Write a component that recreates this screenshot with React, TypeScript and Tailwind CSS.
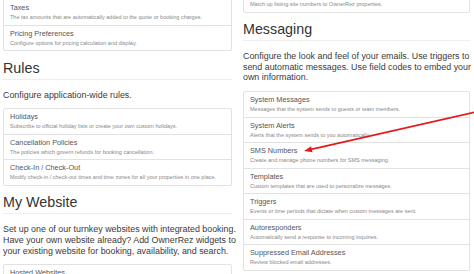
import React from 'react';

// --- Interfaces ---
interface Entry {
  title: string;
  desc: string;
}

interface SectionProps {
  title: string;
  lines: string[];
}

// --- Data ---
const pricingItems: Entry[] = [
  { title: 'Taxes', desc: 'The tax amounts that are automatically added to the quote or booking charges.' },
  { title: 'Pricing Preferences', desc: 'Configure options for pricing calculation and display.' },
];

const rulesItems: Entry[] = [
  { title: 'Holidays', desc: 'Subscribe to official holiday lists or create your own custom holidays.' },
  { title: 'Cancellation Policies', desc: 'The policies which govern refunds for booking cancellation.' },
  { title: 'Check-In / Check-Out', desc: 'Modify check-in / check-out times and time zones for all your properties in one place.' },
];

const websiteItems: Entry[] = [
  { title: 'Hosted Websites', desc: 'Build and manage your OwnerRez hosted websites.' },
];

const channelItems: Entry[] = [
  { title: 'Listing Site Numbers', desc: 'Match up listing site numbers to OwnerRez properties.' },
];

const messagingItems: Entry[] = [
  { title: 'System Messages', desc: 'Messages that the system sends to guests or team members.' },
  { title: 'System Alerts', desc: 'Alerts that the system sends to you automatically.' },
  { title: 'SMS Numbers', desc: 'Create and manage phone numbers for SMS messaging.' },
  { title: 'Templates', desc: 'Custom templates that are used to personalize messages.' },
  { title: 'Triggers', desc: 'Events or time periods that dictate when custom messages are sent.' },
  { title: 'Autoresponders', desc: 'Automatically send a response to incoming inquiries.' },
  { title: 'Suppressed Email Addresses', desc: 'Review blocked email addresses.' },
];

// --- Sub-Components ---
const ListGroup = ({ items }: { items: Entry[] }) => (
  <div className="border border-[#e2e2e2] rounded-[2px] bg-white">
    {items.map((item) => (
      <div key={item.title} className="border-t border-[#e2e2e2] first:border-t-0 px-[6px] pt-[3px] pb-[2.5px]">
        <div className="text-[7.3px] leading-[10px] text-[#555] whitespace-nowrap">{item.title}</div>
        <div className="text-[5.5px] leading-[9px] text-[#888] whitespace-nowrap">{item.desc}</div>
      </div>
    ))}
  </div>
);

const SectionHeader = ({ title, lines }: SectionProps) => (
  <>
    <h2 className="mt-[8.5px] pb-[3px] border-b border-[#eeeeee] text-[14.3px] leading-[16px] text-[#333]">
      {title}
    </h2>
    <p className="mt-[10px] mb-[8px] text-[8.9px] leading-[10.7px] text-[#3a3a3a]">
      {lines.map((line, i) => (
        <span key={i} className="block whitespace-nowrap">{line}</span>
      ))}
    </p>
  </>
);

// --- Main Component ---
export default function App() {
  return (
    <div className="relative w-[474px] h-[274px] overflow-hidden bg-white font-['Liberation_Sans',Arial,sans-serif]">
      <div className="flex gap-[11px] pl-[3px] pr-[4px]">
        {/* Left column */}
        <div className="w-[229px] shrink-0 -mt-px">
          <ListGroup items={pricingItems} />
          <SectionHeader title="Rules" lines={['Configure application-wide rules.']} />
          <ListGroup items={rulesItems} />
          <SectionHeader
            title="My Website"
            lines={[
              'Set up one of our turnkey websites with integrated booking.',
              'Have your own website already? Add OwnerRez widgets to',
              'your existing website for booking, availability, and search.',
            ]}
          />
          <ListGroup items={websiteItems} />
        </div>

        {/* Right column */}
        <div className="w-[227px] shrink-0 -mt-[14px]">
          <ListGroup items={channelItems} />
          <SectionHeader
            title="Messaging"
            lines={[
              'Configure the look and feel of your emails. Use triggers to',
              'send automatic messages. Use field codes to embed your',
              'own information.',
            ]}
          />
          <ListGroup items={messagingItems} />
        </div>
      </div>

      {/* Red annotation arrow */}
      <svg className="absolute inset-0 pointer-events-none" width="474" height="274" viewBox="0 0 474 274">
        <line x1="478" y1="111.5" x2="310" y2="149.6" stroke="#e21b1b" strokeWidth="1.6" />
        <polygon points="304,151 312.5,152.2 311.1,146.3" fill="#e21b1b" />
      </svg>
    </div>
  );
}
